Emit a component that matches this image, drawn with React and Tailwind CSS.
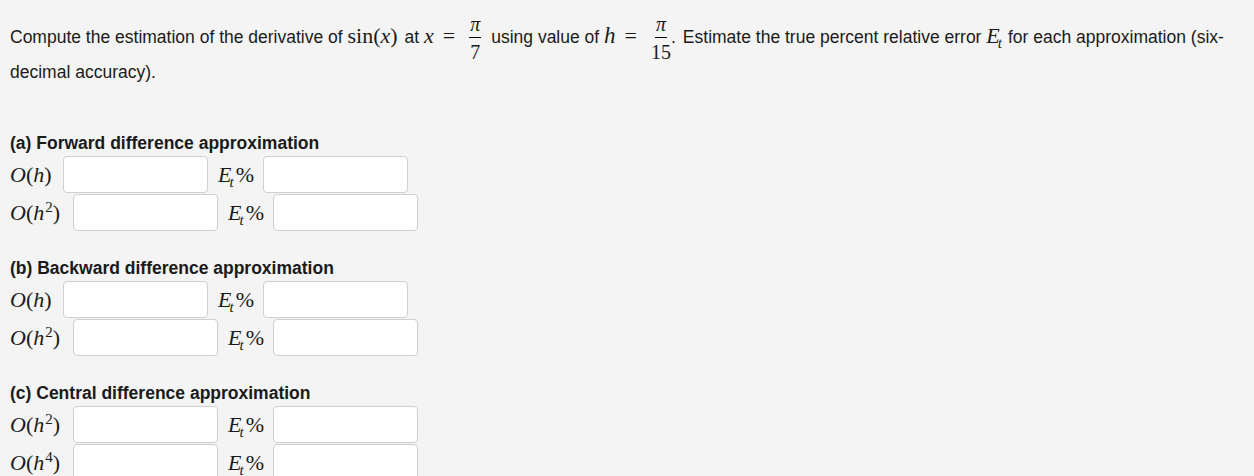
import React from 'react'

const serif = "font-['Liberation_Serif','DejaVu_Serif',serif]"

function Frac({ top, bottom }) {
    return (
        <span className={`inline-flex flex-col items-center align-middle mx-[5px] ${serif} text-[20px] leading-none -mt-[20px] -mb-[20px]`}>
            <span className="italic px-[1px] pb-[3px] border-b border-black">{top}</span>
            <span className="pt-[4px]">{bottom}</span>
        </span>
    )
}

function Eq() {
    return <span className={`${serif} text-[22px] mx-[9px]`}>=</span>
}

function Et({ pct = true }) {
    return (
        <span className={`${serif} text-[22px] whitespace-nowrap`}>
            <i>E</i><i className="inline-block text-[15px] relative top-[5px] -ml-[2px] mr-[2px]">t</i>{pct ? '%' : ''}
        </span>
    )
}

function Field({ label, labelWidth }) {
    return (
        <div className="flex items-center h-[38px]">
            <div className={`${serif} text-[22px] whitespace-nowrap ${labelWidth}`}>{label}</div>
            <input className="w-[145px] h-[37px] bg-white border border-[#cfcfcf] rounded-[4px]" />
            <div className="w-[55px] pl-[10px] flex items-center"><Et /></div>
            <input className="w-[145px] h-[37px] bg-white border border-[#cfcfcf] rounded-[4px]" />
        </div>
    )
}

const Sup = ({ n }) => <span className="inline-block text-[15px] relative -top-[8px] ml-[1px] not-italic">{n}</span>

const Oh = () => <span><i>O</i>(<i>h</i>)</span>
const Oh2 = () => <span><i>O</i>(<i>h</i><Sup n="2" />)</span>
const Oh4 = () => <span><i>O</i>(<i>h</i><Sup n="4" />)</span>

function Section({ title, rows }) {
    return (
        <div className="mb-[28px]">
            <h3 className="font-bold text-[17.5px] leading-[18px] mb-[3px]">{title}</h3>
            {rows.map((r, i) => (
                <Field key={i} label={r.label} labelWidth={r.w} />
            ))}
        </div>
    )
}

export default function App() {
    return (
        <div className="min-h-screen bg-[#f4f4f4] text-[#1a1a1a] font-['Liberation_Sans',Arial,sans-serif] text-[17.5px] px-[10px] pt-[17px]">
            <div className="whitespace-nowrap leading-[37px] h-[37px]">
                Compute the estimation of the derivative of <span className={`${serif} text-[22px] mr-[2px]`}>sin(<i>x</i>)</span> at <span className={`${serif} text-[22px]`}><i>x</i></span>
                <Eq />
                <Frac top="π" bottom="7" />
                <span className="ml-[5px]">using value of </span><span className={`${serif} text-[23px]`}><i>h</i></span>
                <Eq />
                <Frac top="π" bottom="15" />
                <span className="-ml-[5px]">.</span>
                <span className="ml-[7px]">Estimate the true percent relative error </span>
                <Et pct={false} /><span className="ml-[4px]">for each approximation (six-</span>
            </div>
            <div className="leading-[37px]">decimal accuracy).</div>

            <div className="mt-[43px]">
                <Section
                    title="(a) Forward difference approximation"
                    rows={[{ label: <Oh />, w: 'w-[53px]' }, { label: <Oh2 />, w: 'w-[63px]' }]}
                />
                <Section
                    title="(b) Backward difference approximation"
                    rows={[{ label: <Oh />, w: 'w-[53px]' }, { label: <Oh2 />, w: 'w-[63px]' }]}
                />
                <Section
                    title="(c) Central difference approximation"
                    rows={[{ label: <Oh2 />, w: 'w-[63px]' }, { label: <Oh4 />, w: 'w-[63px]' }]}
                />
            </div>
        </div>
    )
}
